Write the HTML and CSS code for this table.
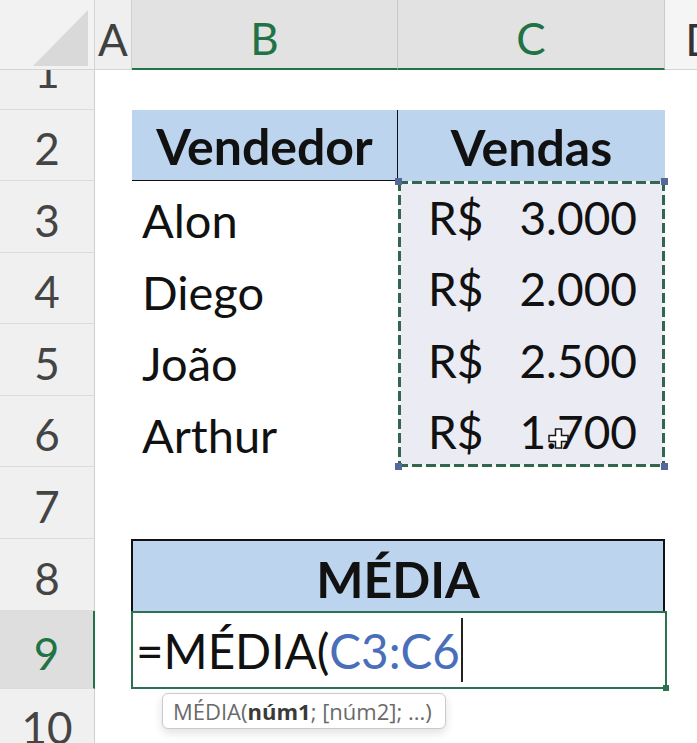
FILE: index.html
```html
<!DOCTYPE html>
<html lang="pt-BR">
<head>
<meta charset="utf-8">
<title>Planilha</title>
<link rel="stylesheet" href="styles.css">
</head>
<body>
<div class="sheet">
  <div class="corner">
    <svg class="corner-tri" width="95" height="70" viewBox="0 0 95 70"><polygon points="33,66 88,66 88,10" fill="#d9d9d9"/></svg>
  </div>
  <div class="ch ch-a">A</div>
  <div class="ch ch-on">B</div>
  <div class="ch ch-on">C</div>
  <div class="ch ch-d">D</div>

  <div class="rh rh-1"><span>1</span></div>
  <div class="rh">2</div>
  <div class="rh">3</div>
  <div class="rh">4</div>
  <div class="rh">5</div>
  <div class="rh">6</div>
  <div class="rh">7</div>
  <div class="rh">8</div>
  <div class="rh rh-on">9</div>
  <div class="rh">10</div>

  <div class="th th-b">Vendedor</div>
  <div class="th th-c">Vendas</div>

  <div class="names">
    <div class="name">Alon</div>
    <div class="name">Diego</div>
    <div class="name">João</div>
    <div class="name">Arthur</div>
  </div>

  <div class="sel">
    <div class="val"><span>R$</span><span>3.000</span></div>
    <div class="val"><span>R$</span><span>2.000</span></div>
    <div class="val"><span>R$</span><span>2.500</span></div>
    <div class="val"><span>R$</span><span>1.700</span></div>
    <i class="handle h-tl"></i>
    <i class="handle h-tr"></i>
    <i class="handle h-bl"></i>
    <i class="handle h-br"></i>
  </div>

  <div class="avg-head">MÉDIA</div>
  <div class="formula">=MÉDIA(<span class="ref">C3:C6</span><span class="caret"></span><i class="fill-handle"></i></div>

  <svg class="cursor" width="21" height="21" viewBox="0 0 21 21"><polygon points="7.5,1 13.5,1 13.5,7.5 20,7.5 20,13.5 13.5,13.5 13.5,20 7.5,20 7.5,13.5 1,13.5 1,7.5 7.5,7.5" fill="#fff" stroke="#1a1a1a" stroke-width="1.5"/></svg>

  <div class="tip">MÉDIA(<b>núm1</b>; [núm2]; ...)</div>
</div>
</body>
</html>
```

FILE: styles.css
```css
html, body {
  margin: 0;
  padding: 0;
  overflow: hidden;
  background: #ffffff;
}

.sheet {
  position: relative;
  display: grid;
  grid-template-columns: 95px 37px 266px 267px 75px;
  grid-template-rows: 70px 40px 71px 72px 71px 72px 71px 72px 72px 78px 71px;
  width: 740px;
  font-family: Lato, "Open Sans", sans-serif;
  color: #111;
}

/* ---------- column headers ---------- */
.corner {
  background: #f2f2f2;
  border-right: 1px solid #d4d4d4;
  border-bottom: 1px solid #d4d4d4;
  box-sizing: border-box;
  overflow: hidden;
}
.corner-tri { display: block; }

.ch {
  display: flex;
  align-items: center;
  justify-content: center;
  padding-top: 8px;
  box-sizing: border-box;
  font-size: 44px;
  color: #404040;
  background: #efefef;
  border-right: 1px solid #cfcfcf;
  border-bottom: 1px solid #d4d4d4;
  overflow: hidden;
}
.ch-on {
  background: #e2e2e2;
  color: #217346;
  border-bottom: 2px solid #217346;
  border-right-color: #c9c9c9;
}
.ch-d {
  background: #f5f5f5;
  color: #333;
}

/* ---------- row headers ---------- */
.rh {
  grid-column: 1;
  display: flex;
  align-items: center;
  justify-content: center;
  padding-top: 6px;
  box-sizing: border-box;
  font-size: 44px;
  color: #444;
  background: #f0f0f0;
  border-right: 1px solid #cfcfcf;
  border-bottom: 1px solid #dcdcdc;
  overflow: hidden;
}
.rh-1 {
  align-items: flex-end;
  padding-top: 0;
}
.rh-1 span {
  display: block;
  line-height: 1;
  margin-bottom: 16px;
}
.rh-on {
  background: #dedede;
  color: #217346;
  border-right: 2px solid #217346;
}

/* ---------- table header ---------- */
.th {
  grid-row: 3;
  display: flex;
  align-items: center;
  justify-content: center;
  padding-top: 2px;
  box-sizing: border-box;
  background: #bdd4ee;
  font-size: 50px;
  font-weight: 700;
}
.th-b {
  grid-column: 3;
  border-right: 1px solid #111;
  border-bottom: 1px solid #111;
}
.th-c {
  grid-column: 4;
}

/* ---------- names ---------- */
.names {
  grid-column: 3;
  grid-row: 4 / 8;
  display: grid;
  grid-template-rows: 72px 71px 72px 71px;
}
.name {
  display: flex;
  align-items: center;
  padding: 6px 0 0 10px;
  box-sizing: border-box;
  font-size: 47px;
}

/* ---------- copied selection ---------- */
.sel {
  grid-column: 4;
  grid-row: 4 / 8;
  position: relative;
  display: grid;
  grid-template-rows: 72px 71px 72px 71px;
  background:
    repeating-linear-gradient(90deg, #33664e 0 10px, #f4f6f4 10px 14px) top left / 100% 3px no-repeat,
    repeating-linear-gradient(90deg, #33664e 0 10px, #f4f6f4 10px 14px) bottom left / 100% 3px no-repeat,
    repeating-linear-gradient(180deg, #33664e 0 10px, #f4f6f4 10px 14px) top left / 3px 100% no-repeat,
    repeating-linear-gradient(180deg, #33664e 0 10px, #f4f6f4 10px 14px) top right / 3px 100% no-repeat,
    #ebebf4;
}
.val {
  display: flex;
  align-items: center;
  justify-content: space-between;
  padding: 0 28px 0 30px;
  font-size: 46px;
}
.handle {
  position: absolute;
  width: 7px;
  height: 7px;
  background: #56689a;
}
.h-tl { left: -3px; top: -3px; }
.h-tr { right: -3px; top: -3px; }
.h-bl { left: -3px; bottom: -3px; }
.h-br { right: -3px; bottom: -3px; }

/* ---------- média ---------- */
.avg-head {
  grid-column: 3 / 5;
  grid-row: 9;
  display: flex;
  align-items: center;
  justify-content: center;
  padding-top: 6px;
  box-sizing: border-box;
  margin-left: -1px;
  background: #bdd4ee;
  border: 2px solid #111;
  border-bottom: none;
  font-size: 50px;
  font-weight: 700;
}

.formula {
  grid-column: 3 / 5;
  grid-row: 10;
  position: relative;
  display: flex;
  align-items: center;
  padding-left: 3px;
  box-sizing: border-box;
  margin: 0 -2px 0 -1px;
  background: #fff;
  border: 2px solid #2c7150;
  font-size: 47.5px;
  white-space: nowrap;
}
.ref { color: #4a6fba; }
.caret {
  display: inline-block;
  width: 2px;
  height: 64px;
  margin-left: 1px;
  background: #222;
}
.fill-handle {
  position: absolute;
  right: -4px;
  bottom: -4px;
  width: 6px;
  height: 6px;
  background: #2c7150;
}

/* ---------- overlays ---------- */
.cursor {
  position: absolute;
  left: 548px;
  top: 428px;
}

.tip {
  position: absolute;
  left: 162px;
  top: 693px;
  width: 284px;
  height: 36px;
  box-sizing: border-box;
  display: flex;
  align-items: center;
  padding-left: 10px;
  background: #fff;
  border: 1px solid #cacaca;
  border-radius: 6px;
  box-shadow: 0 4px 10px rgba(0, 0, 0, 0.12);
  font-family: "Open Sans", sans-serif;
  font-size: 22px;
  color: #6a6a6a;
  white-space: nowrap;
}
.tip b {
  color: #3a3a3a;
  font-weight: 700;
}
```
